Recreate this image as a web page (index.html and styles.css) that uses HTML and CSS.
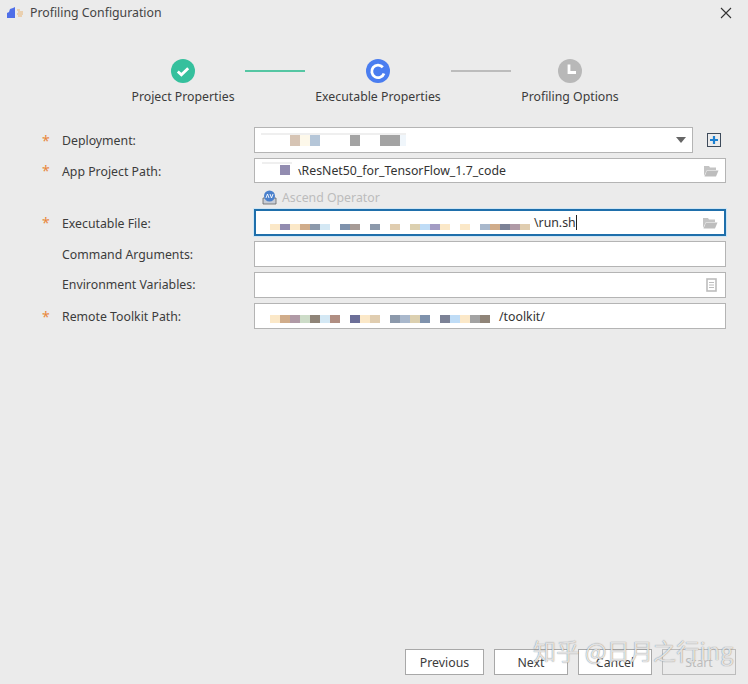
FILE: index.html
```html
<!DOCTYPE html>
<html lang="en">
<head>
<meta charset="utf-8">
<title>Profiling Configuration</title>
<link rel="stylesheet" href="styles.css">
</head>
<body>
<div class="dialog">
  <header class="titlebar">
    <svg class="app-icon" width="17" height="12" viewBox="0 0 17 12"><path d="M0 11V6l2-1 1-3 3-1 2-1v11z" fill="#4f6fe8"/><path d="M10 3h3M11 5h5M10 7h6M11 9h4" stroke="#eab676" stroke-width="1.2"/></svg>
    <span class="title">Profiling Configuration</span>
    <svg class="close" width="12" height="12" viewBox="0 0 12 12"><path d="M1 1l10 10M11 1L1 11" stroke="#333" stroke-width="1.1" fill="none"/></svg>
  </header>

  <nav class="stepper">
    <div class="step step-a">
      <svg width="24" height="24" viewBox="0 0 24 24"><circle cx="12" cy="12" r="12" fill="#35c09d"/><path d="M6.800 12.400l3.600 3.400 6.800-6.600" stroke="#fff" stroke-width="2.800" fill="none"/></svg>
      <span>Project Properties</span>
    </div>
    <div class="link link-done"></div>
    <div class="step step-b">
      <svg width="24" height="24" viewBox="0 0 24 24"><circle cx="12" cy="12" r="12" fill="#4a7df0"/><path d="M16.800 8.200A6.300 6.300 0 1 0 18 14.500" stroke="#fff" stroke-width="2.800" fill="none"/></svg>
      <span>Executable Properties</span>
    </div>
    <div class="link link-todo"></div>
    <div class="step step-c">
      <svg width="24" height="24" viewBox="0 0 24 24"><circle cx="12" cy="12" r="12" fill="#b8b8b8"/><path d="M11 5.500v8h7" stroke="#fff" stroke-width="2.800" fill="none"/></svg>
      <span>Profiling Options</span>
    </div>
  </nav>

  <main class="form">
    <div class="row row-deploy">
      <span class="star">*</span><label>Deployment:</label>
      <div class="field field-short">
        <div class="mosaic mosaic-deploy">
          <i></i><i></i><i class="tan"></i><i class="cream"></i><i class="blue"></i><i></i><i></i><i></i><i class="grey"></i><i></i><i></i><i class="grey"></i><i class="grey"></i><i class="mist"></i>
        </div>
        <svg class="arrow" width="10" height="6" viewBox="0 0 10 6"><path d="M0 0h10L5 6z" fill="#666"/></svg>
      </div>
      <svg class="add" width="14" height="14" viewBox="0 0 14 14"><rect x=".5" y=".5" width="13" height="13" fill="none" stroke="#3d4a5a"/><path d="M7 3v8M3 7h8" stroke="#1c7fd0" stroke-width="2.200"/></svg>
    </div>

    <div class="row row-app">
      <span class="star">*</span><label>App Project Path:</label>
      <div class="field">
        <div class="mosaic mosaic-app"><i></i><i class="violet"></i></div>
        <span class="value value-app">\ResNet50_for_TensorFlow_1.7_code</span>
        <svg class="folder" width="16" height="12" viewBox="0 0 16 12"><path d="M1 11V1h5l1 1.500h6V5H4z" fill="#c4c4c4"/><path d="M1.500 11.500 4 5.500h11.500L13 11.500z" fill="#bdbdbd"/></svg>
      </div>
    </div>

    <div class="operator">
      <svg width="15" height="15" viewBox="0 0 15 15"><path d="M1 14V8h13v6z" fill="#c6ccd6" stroke="#666" stroke-width=".8"/><circle cx="7.500" cy="6" r="5.500" fill="#4a80cc"/><path d="M4 8l1.500-4L7 8M8 4l1.500 4L11 4" stroke="#fff" fill="none" stroke-width=".9"/></svg>
      <span>Ascend Operator</span>
    </div>

    <div class="row row-exec">
      <span class="star">*</span><label>Executable File:</label>
      <div class="field field-focus">
        <div class="mosaic mosaic-exec">
          <i class="peach"></i><i class="violet"></i><i class="peach"></i><i class="tan2"></i><i class="slate"></i><i class="ice"></i><i></i><i class="steel"></i><i class="mauve"></i><i></i><i class="slate"></i><i></i><i class="sand"></i><i></i><i class="sand2"></i><i class="sky"></i><i class="violet2"></i><i class="peach"></i><i></i><i class="peach"></i><i></i><i class="slate2"></i><i class="tan2"></i><i class="dusk"></i><i class="plum"></i><i class="sand"></i>
        </div>
        <span class="value value-exec">\run.sh</span><span class="caret"></span>
        <svg class="folder" width="16" height="12" viewBox="0 0 16 12"><path d="M1 11V1h5l1 1.500h6V5H4z" fill="#c4c4c4"/><path d="M1.500 11.500 4 5.500h11.500L13 11.500z" fill="#bdbdbd"/></svg>
      </div>
    </div>

    <div class="row row-cmd">
      <span class="star"></span><label>Command Arguments:</label>
      <div class="field"></div>
    </div>

    <div class="row row-env">
      <span class="star"></span><label>Environment Variables:</label>
      <div class="field">
        <svg class="doc" width="11" height="14" viewBox="0 0 11 14"><rect x="1" y="1" width="9" height="12" fill="none" stroke="#bdbdbd" stroke-width="1.600"/><path d="M3 4.500h5M3 7h5M3 9.500h5" stroke="#bdbdbd"/></svg>
      </div>
    </div>

    <div class="row row-remote">
      <span class="star">*</span><label>Remote Toolkit Path:</label>
      <div class="field">
        <div class="mosaic mosaic-remote">
          <i class="peach"></i><i class="tan2"></i><i class="plum"></i><i class="sage"></i><i class="taupe"></i><i class="ice"></i><i class="rose"></i><i></i><i class="indigo"></i><i class="peach"></i><i class="sand"></i><i></i><i class="slate"></i><i class="slate2"></i><i class="sand2"></i><i class="steel"></i><i></i><i class="dusk"></i><i class="sky"></i><i class="peach"></i><i class="grey"></i><i class="taupe"></i>
        </div>
        <span class="value value-remote">/toolkit/</span>
      </div>
    </div>
  </main>

  <footer class="actions">
    <button class="btn btn-prev" type="button">Previous</button>
    <button class="btn btn-next" type="button">Next</button>
    <button class="btn btn-cancel" type="button">Cancel</button>
    <button class="btn btn-start" type="button" disabled>Start</button>
  </footer>

  <div class="watermark">知乎 @日月之行ing</div>
</div>
</body>
</html>
```
FILE: styles.css
```css
* { box-sizing: border-box; }
html, body { margin: 0; padding: 0; }
body { background: #ebebeb; overflow: hidden; }

.dialog {
  position: relative;
  width: 748px;
  height: 684px;
  display: flex;
  flex-direction: column;
  font-family: "Noto Sans", "Open Sans", sans-serif;
  font-size: 12.3px;
  color: #3c3c3c;
}

.titlebar {
  height: 26px;
  display: flex;
  align-items: center;
  padding: 0 16px 0 7px;
}
.app-icon { margin-right: 6px; }
.title { flex: 1; color: #444; margin-top: -2px; }

.stepper {
  height: 80px;
  padding-top: 33px;
  display: flex;
  align-items: flex-start;
}
.step {
  display: flex;
  flex-direction: column;
  align-items: center;
  gap: 5px;
  white-space: nowrap;
  width: 24px;
}
.step svg { flex: none; }
.step-a { margin-left: 171px; }
.step-b { margin-left: 61px; }
.step-c { margin-left: 47px; }
.link { width: 60px; height: 2px; margin-top: 11px; }
.link-done { margin-left: 50px; background: #55c6a3; }
.link-todo { margin-left: 61px; background: #bcbcbc; }

.form { display: flex; flex-direction: column; padding-top: 21px; }
.row { display: flex; align-items: center; height: 26px; }
.star { width: 62px; padding-left: 42px; color: #e8873a; font-size: 14px; }
.row label { width: 192px; }

.row-app { margin-top: 5px; height: 25px; }
.row-app label { padding-top: 2px; }
.row-exec { height: 27px; }
.row-exec label { padding-top: 2px; }
.row-cmd { margin-top: 5px; }
.row-env { margin-top: 5px; }
.row-env label { padding-bottom: 2px; }
.row-remote { margin-top: 5px; }

.field {
  position: relative;
  width: 472px;
  height: 100%;
  display: flex;
  align-items: center;
  background: #fff;
  border: 1px solid #b4b4b4;
  padding: 0 6px 0 15px;
  color: #333;
}
.field-short { width: 439px; }
.field-focus {
  border: 2px solid #1f6fab;
  padding-left: 14px;
  box-shadow: 0 0 0 1px #cfe6f5;
}

.mosaic { position: relative; display: flex; flex: none; height: 8px; }
.mosaic i { display: block; width: 10px; height: 100%; }
.mosaic-deploy { height: 11px; margin-top: 1px; }
.mosaic-deploy i.mist { width: 6px; }
.mosaic-deploy::before {
  content: "";
  position: absolute;
  left: -9px;
  top: -2px;
  width: 145px;
  height: 2px;
  background: #efefef;
}
.mosaic-app { height: 10px; margin-top: -1px; }
.mosaic-app::before {
  content: "";
  position: absolute;
  left: -8px;
  top: -3px;
  width: 30px;
  height: 2px;
  background: #efefef;
}
.mosaic-app::after {
  content: "";
  position: absolute;
  left: 26px;
  top: -3px;
  width: 6px;
  height: 7px;
  background: #fff;
  z-index: 1;
}
.mosaic-exec { height: 6px; margin-top: 9px; }
.mosaic-remote { height: 8px; margin-top: 6px; }

.tan { background: #d6c4b4; }
.cream { background: #fdf8ea; }
.blue { background: #b5c6d8; }
.grey { background: #a3a3a3; }
.mist { background: #f0f6fb; }
.violet { background: #928cb0; }
.peach { background: #fbe8c8; }
.tan2 { background: #d0ac8a; }
.slate { background: #8c99ab; }
.ice { background: #d4e8f4; }
.steel { background: #7f92ac; }
.mauve { background: #a79b96; }
.sand { background: #e0cdb0; }
.sand2 { background: #dcd0b0; }
.sky { background: #bfdcf6; }
.violet2 { background: #a39cc4; }
.slate2 { background: #a9b8cc; }
.dusk { background: #7c8296; }
.plum { background: #b09aa6; }
.sage { background: #cddcc8; }
.taupe { background: #8f8478; }
.rose { background: #b08e82; }
.indigo { background: #6c6f98; }

.value { white-space: nowrap; }
.value-app { margin-left: 7px; }
.value-exec { margin-left: 4px; }
.value-remote { margin-left: 9px; }
.caret { width: 1px; height: 15px; background: #222; }

.arrow { margin-left: auto; }
.add { margin-left: 14px; }
.folder { margin-left: auto; }
.doc { margin-left: auto; margin-right: 2px; }

.operator {
  height: 26px;
  padding-top: 2px;
  margin-left: 262px;
  display: flex;
  align-items: center;
  gap: 5px;
  color: #bcbcbc;
}

.actions {
  margin-top: auto;
  padding: 0 12px 9px 405px;
  display: flex;
}
.btn {
  height: 26px;
  padding: 0;
  background: #fff;
  border: 1px solid #a8a8a8;
  font: inherit;
  color: #3c3c3c;
}
.btn-prev { width: 79px; }
.btn-next { width: 74px; margin-left: 10px; }
.btn-cancel { width: 74px; margin-left: 10px; }
.btn-start { width: 74px; margin-left: 10px; background: #ebebeb; border-color: #bcbcbc; color: #bcbcbc; }

.watermark {
  position: absolute;
  left: 533px;
  top: 633px;
  font-family: "Noto Sans CJK SC", "Noto Sans", sans-serif;
  font-size: 23px;
  line-height: 34px;
  letter-spacing: 0.2px;
  white-space: nowrap;
  color: rgba(255, 255, 255, 0.8);
  text-shadow: 0 0 1px rgba(70, 70, 70, 0.8);
}
```
